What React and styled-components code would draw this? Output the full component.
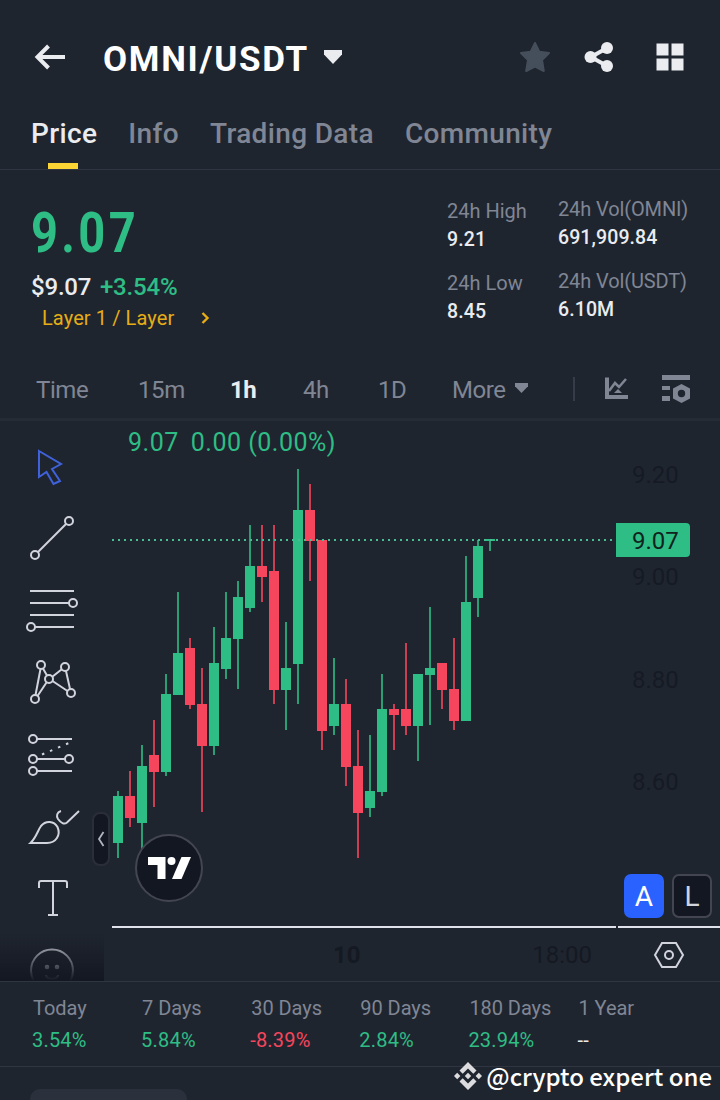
import React from 'react';
import styled, { createGlobalStyle } from 'styled-components';

const UP = '#2ebd85';
const DOWN = '#f6465d';

// x is the centre of the candle, the rest are y positions: high, body top, body bottom, low
const candles = [
  [118, 791, 796, 843, 858, UP],
  [130, 771, 796, 818, 827, DOWN],
  [142, 745, 766, 823, 850, UP],
  [154, 720, 755, 772, 807, DOWN],
  [166, 674, 694, 772, 776, UP],
  [178, 592, 653, 695, 695, UP],
  [190, 638, 648, 705, 709, DOWN],
  [202, 668, 704, 746, 812, DOWN],
  [214, 627, 663, 746, 755, UP],
  [226, 592, 638, 669, 679, UP],
  [238, 581, 597, 639, 689, UP],
  [250, 525, 566, 608, 612, UP],
  [262, 525, 566, 577, 602, DOWN],
  [274, 525, 571, 690, 704, DOWN],
  [286, 622, 668, 690, 730, UP],
  [298, 469, 510, 664, 704, UP],
  [310, 484, 510, 541, 581, DOWN],
  [322, 540, 540, 731, 750, DOWN],
  [334, 658, 704, 726, 735, UP],
  [346, 679, 704, 767, 786, DOWN],
  [358, 730, 766, 813, 858, DOWN],
  [370, 735, 791, 808, 817, UP],
  [382, 674, 709, 792, 796, UP],
  [394, 704, 709, 715, 750, DOWN],
  [406, 643, 709, 726, 735, DOWN],
  [418, 674, 674, 726, 761, UP],
  [430, 607, 668, 675, 725, UP],
  [442, 663, 663, 690, 709, DOWN],
  [454, 638, 689, 721, 730, DOWN],
  [466, 556, 602, 721, 721, UP],
  [478, 540, 546, 598, 617, UP],
  [490, 539, 539, 541, 551, UP],
];

const tabs = ['Price', 'Info', 'Trading Data', 'Community'];

const performance = [
  { label: 'Today', value: '3.54%', color: UP },
  { label: '7 Days', value: '5.84%', color: UP },
  { label: '30 Days', value: '-8.39%', color: DOWN },
  { label: '90 Days', value: '2.84%', color: UP },
  { label: '180 Days', value: '23.94%', color: UP },
  { label: '1 Year', value: '--', color: '#eaecef' },
];

const tools = [
  <path key="cursor" d="M39 21 L61 34 L52 39 L60 51 L53.5 54 L46.500 42 L39 47 Z" stroke="#3f62dc" />,
  <g key="line">
    <circle cx="69" cy="19" r="4" />
    <circle cx="35" cy="53" r="4" />
    <path d="M38 50 L66 22" />
  </g>,
  <g key="fib">
    <path d="M30 17 H74 M30 29 H69 M30 41 H74 M35 53 H74" />
    <circle cx="73" cy="29" r="4" />
    <circle cx="31" cy="53" r="4" />
  </g>,
  <g key="pattern">
    <circle cx="41" cy="19" r="4" />
    <circle cx="65" cy="21" r="4" />
    <circle cx="49" cy="33" r="4" />
    <circle cx="71" cy="47" r="4" />
    <circle cx="35" cy="53" r="4" />
    <path d="M40.500 23 L35.500 49 M43 22.500 L47 29.500 M52 31 L61.500 23.500 M66 25 L70 43 M52.500 35 L67.500 45 M46.500 36.500 L37.500 50" />
  </g>,
  <g key="forecast">
    <circle cx="33" cy="21" r="4" />
    <circle cx="33" cy="41" r="4" />
    <circle cx="69" cy="41" r="4" />
    <circle cx="33" cy="53" r="4" />
    <path d="M37 21 H72 M37 41 H65 M37 53 H72" />
    <path d="M42 36.500 L69 25" strokeDasharray="2.500 6.200" />
  </g>,
  <g key="brush">
    <path d="M30.500 53 C36 48 38 40 41 36 C46 30 54 31 57.500 37 C61 45 56 53 47 53 Z" />
    <path d="M61 21 C57 22 56 26 58 29 C61 33 64 35 67 32.500 L79 21" />
  </g>,
  <path key="text" d="M39 26 V21 Q39 19 41 19 H65 Q67 19 67 21 V26 M53 19 V53 M48 53 H58" />,
  <g key="smiley">
    <circle cx="52" cy="36.500" r="21" />
    <circle cx="47" cy="33" r="1.300" />
    <circle cx="57" cy="33" r="1.300" />
    <path d="M46 41 C46.500 46 57.500 46 58 41" />
  </g>,
];

const Caret = ({ width, height, color }) => (
  <svg width={width} height={height} viewBox="0 0 18 14" preserveAspectRatio="none">
    <path d="M0 0 H18 V4.500 L9 14 L0 4.500 Z" fill={color} />
  </svg>
);

const TopBar = () => (
  <Header>
    <BackIcon width="32" height="26" viewBox="0 0 32 26">
      <path d="M31 13 H4 M14.500 2 L3.500 13 L14.500 24" fill="none" stroke="#eaecef" strokeWidth="4" />
    </BackIcon>
    <Pair>OMNI/USDT</Pair>
    <Caret width={18} height={14} color="#eaecef" />
    <HeaderActions>
      <svg width="32" height="32" viewBox="0 0 32 32">
        <path
          d="M16 2 L20.300 10.700 L30 12 L23 19 L24.800 30 L16 25.500 L7.200 30 L9 19 L2 12 L11.700 10.700 Z"
          fill="#454e5b"
          stroke="#454e5b"
          strokeWidth="2"
          strokeLinejoin="round"
        />
      </svg>
      <svg width="30" height="32" viewBox="0 0 30 32">
        <path d="M23 7 L7 16 L23 25" fill="none" stroke="#eaecef" strokeWidth="4" />
        <circle cx="23" cy="7" r="6" fill="#eaecef" />
        <circle cx="6.500" cy="16" r="6" fill="#eaecef" />
        <circle cx="23" cy="25" r="6" fill="#eaecef" />
      </svg>
      <svg width="28" height="28" viewBox="0 0 28 28" fill="#eaecef">
        <path d="M0.500 0.500 H12.500 V12.500 H0.500 Z M15.500 0.500 H27.500 V12.500 H15.500 Z M0.500 15.500 H12.500 V27.500 H0.500 Z M15.500 15.500 H27.500 V27.500 H15.500 Z" />
      </svg>
    </HeaderActions>
  </Header>
);

const Summary = () => (
  <SummaryRow>
    <PriceColumn>
      <LastPrice>9.07</LastPrice>
      <FiatLine>
        $9.07 <Change>+3.54%</Change>
      </FiatLine>
      <TagLine>
        Layer 1 / Layer
        <svg width="9" height="12" viewBox="0 0 9 12">
          <path d="M1.500 1 L6.500 6 L1.500 11" fill="none" stroke="#e6ad16" strokeWidth="2.400" />
        </svg>
      </TagLine>
    </PriceColumn>
    <StatColumn $top={29}>
      <StatLabel $spacing={0}>24h High</StatLabel>
      <StatValue>9.21</StatValue>
      <StatLabel $spacing={0}>24h Low</StatLabel>
      <StatValue>8.45</StatValue>
    </StatColumn>
    <StatColumn $top={27}>
      <StatLabel $spacing={-0.12}>24h Vol(OMNI)</StatLabel>
      <StatValue>691,909.84</StatValue>
      <StatLabel $spacing={-0.12}>24h Vol(USDT)</StatLabel>
      <StatValue>6.10M</StatValue>
    </StatColumn>
  </SummaryRow>
);

const Intervals = () => (
  <IntervalBar>
    <Interval>Time</Interval>
    <Interval>15m</Interval>
    <Interval $active>1h</Interval>
    <Interval>4h</Interval>
    <Interval>1D</Interval>
    <Interval>
      More
      <Caret width={13} height={10} color="#808694" />
    </Interval>
    <Divider />
    <svg width="24" height="24" viewBox="0 0 24 24" fill="none" stroke="#808694">
      <path d="M2 0.500 V20 H23" strokeWidth="4" />
      <path d="M4 14 L10 6 L14 10 L21 2" strokeWidth="2.500" />
      <path d="M9 16 L13 12 L17 16 Z" fill="#808694" stroke="none" />
    </svg>
    <svg width="29" height="30" viewBox="0 0 29 30" fill="#808694">
      <path d="M0 1 H28 V6 H0 Z M0 12 H8 V16 H0 Z M0 22 H8 V27 H0 Z" />
      <path
        fillRule="evenodd"
        d="M19.500 10 L28 14.500 V24.500 L19.500 29 L11 24.500 V14.500 Z M19.500 15.800 A3.700 3.700 0 1 0 19.500 23.200 A3.700 3.700 0 1 0 19.500 15.800 Z"
      />
    </svg>
  </IntervalBar>
);

const Chart = () => (
  <ChartArea>
    <Toolbar>
      {tools.map((tool) => (
        <ToolIcon key={tool.key} viewBox="0 0 104 72">
          {tool}
        </ToolIcon>
      ))}
      <ToolbarFade />
    </Toolbar>
    <Collapse>
      <svg width="8" height="18" viewBox="0 0 8 18">
        <path d="M6.500 2 L2 9 L6.500 16" fill="none" stroke="#b2b5be" strokeWidth="1.800" />
      </svg>
    </Collapse>

    <PlotColumn>
      <Plot viewBox="112 421 504 505">
        {candles.map(([x, high, top, bottom, low, color]) => (
          <g key={x} fill={color}>
            <rect x={x - 1} y={high} width="2" height={low - high} opacity="0.8" />
            <rect x={x - 5} y={top} width="10" height={bottom - top} />
          </g>
        ))}
        <path d="M112 540 H616" stroke="#48bd93" strokeWidth="2" strokeDasharray="2 4" />
      </Plot>
      <Legend>
        <span>9.07</span>
        <span>0.00 (0.00%)</span>
      </Legend>
      <Brand>
        <svg width="44" height="24" viewBox="0 0 44 24" fill="#fff">
          <path d="M1 1 H18.500 V23 H10.500 V9 H1 Z" />
          <circle cx="24.500" cy="5" r="4" />
          <path d="M34.500 1 H44 L34.500 23 H25 Z" />
        </svg>
      </Brand>
      <TimeAxis>
        <TimeLabel $bold>10</TimeLabel>
        <TimeLabel>18:00</TimeLabel>
      </TimeAxis>
    </PlotColumn>

    <ScaleColumn>
      <PriceScale>
        <PriceLabel>9.20</PriceLabel>
        <PriceLabel>9.00</PriceLabel>
        <PriceLabel>8.80</PriceLabel>
        <PriceLabel>8.60</PriceLabel>
        <PriceTag>9.07</PriceTag>
        <ScaleButtons>
          <ScaleButton $active>A</ScaleButton>
          <ScaleButton>L</ScaleButton>
        </ScaleButtons>
      </PriceScale>
      <AxisSettings>
        <svg width="32" height="28" viewBox="0 0 32 28" fill="none" stroke="#d1d4dc" strokeWidth="2">
          <path d="M9 2 H23 L30 14 L23 26 H9 L2 14 Z" />
          <circle cx="16" cy="14" r="4" />
        </svg>
      </AxisSettings>
    </ScaleColumn>
  </ChartArea>
);

const App = () => {
  return (
    <>
      <GlobalStyle />
      <Screen>
        <TopBar />
        <Tabs>
          {tabs.map((tab, i) => (
            <Tab key={tab} $active={i === 0}>
              {tab}
            </Tab>
          ))}
        </Tabs>
        <Summary />
        <Intervals />
        <Chart />
        <Performance>
          {performance.map(({ label, value, color }) => (
            <Period key={label}>
              <PeriodLabel>{label}</PeriodLabel>
              <PeriodValue $color={color}>{value}</PeriodValue>
            </Period>
          ))}
        </Performance>
        <BottomArea>
          <BottomPill />
        </BottomArea>
        <Watermark>
          <svg width="28" height="28" viewBox="0 0 28 28" fill="#dcdcde">
            <path d="M14 0 L22.500 8.500 L19.300 11.700 L14 6.400 L8.700 11.700 L5.500 8.500 Z" />
            <path d="M14 28 L22.500 19.500 L19.300 16.300 L14 21.600 L8.700 16.300 L5.500 19.500 Z" />
            <path d="M14 10.800 L17.200 14 L14 17.200 L10.800 14 Z M3.200 10.800 L6.400 14 L3.200 17.200 L0 14 Z M24.800 10.800 L28 14 L24.800 17.200 L21.600 14 Z" />
          </svg>
          @crypto expert one
        </Watermark>
      </Screen>
    </>
  );
};

export default App;

const GlobalStyle = createGlobalStyle`
  * {
    box-sizing: border-box;
  }
  body {
    margin: 0;
    background: #1f252f;
    font-family: Roboto, "Liberation Sans", sans-serif;
  }
  svg {
    display: block;
    flex-shrink: 0;
  }
`;

const Screen = styled.div`
  position: relative;
  width: 720px;
  height: 1100px;
  overflow: hidden;
  display: grid;
  grid-template-columns: 720px;
  grid-template-rows: 114px 56px 190px 61px 560px 86px 33px;
  background: #1f252f;
  color: #eaecef;
  white-space: nowrap;
`;

const Header = styled.header`
  display: flex;
  align-items: center;
  padding: 0 36px 0 34px;
`;

const BackIcon = styled.svg`
  margin-right: 37px;
`;

const Pair = styled.h1`
  width: 221px;
  margin: 4px 0 0;
  font-size: 35px;
  font-weight: 700;
  letter-spacing: 1.7px;
  color: #fff;
`;

const HeaderActions = styled.div`
  margin-left: auto;
  display: flex;
  align-items: center;
  gap: 42px;

  svg:first-child {
    margin-right: -9px;
  }
`;

const Tabs = styled.nav`
  display: flex;
  gap: 31px;
  padding-left: 31px;
  border-bottom: 1px solid #2f3641;
`;

const Tab = styled.div`
  position: relative;
  line-height: 39px;
  font-size: 28px;
  font-weight: 500;
  letter-spacing: 0.35px;
  color: ${({ $active }) => ($active ? '#eaecef' : '#808694')};

  &::after {
    content: '';
    display: ${({ $active }) => ($active ? 'block' : 'none')};
    position: absolute;
    left: 17px;
    bottom: 0;
    width: 30px;
    height: 6px;
    background: #fcd535;
  }
`;

const SummaryRow = styled.section`
  display: grid;
  grid-template-columns: 416px 111px auto;
  padding-left: 31px;
`;

const PriceColumn = styled.div`
  padding-top: 31px;
`;

const LastPrice = styled.div`
  line-height: 64px;
  font-size: 56px;
  font-weight: 700;
  letter-spacing: 4px;
  color: ${UP};
  transform: scaleX(0.84);
  transform-origin: left;
`;

const FiatLine = styled.div`
  margin-top: 7px;
  line-height: 30px;
  font-size: 24px;
  font-weight: 500;
  letter-spacing: -0.2px;
`;

const Change = styled.span`
  margin-left: 3px;
  color: ${UP};
`;

const TagLine = styled.div`
  display: flex;
  align-items: center;
  gap: 27px;
  padding-left: 11px;
  line-height: 32px;
  font-size: 20px;
  letter-spacing: 0.1px;
  color: #e6ad16;
`;

const StatColumn = styled.div`
  padding-top: ${({ $top }) => $top}px;
`;

const StatLabel = styled.div`
  line-height: 24px;
  font-size: 20px;
  letter-spacing: ${({ $spacing }) => $spacing}px;
  color: #808694;
`;

const StatValue = styled.div`
  margin: 3px 0 17px;
  line-height: 28px;
  font-size: 19.5px;
  font-weight: 500;
  letter-spacing: 0.1px;
`;

const IntervalBar = styled.div`
  display: grid;
  grid-template-columns: 102px 92px 73px 75px 74px 121px 32px 57px auto;
  align-items: center;
  padding-left: 36px;
  border-bottom: 3px solid #262c36;
`;

const Interval = styled.div`
  display: flex;
  align-items: center;
  gap: 9px;
  padding-top: 2px;
  font-size: 24px;
  font-weight: ${({ $active }) => ($active ? 700 : 400)};
  letter-spacing: -0.4px;
  color: ${({ $active }) => ($active ? '#eaecef' : '#808694')};

  svg {
    margin-top: -4px;
  }
`;

const Divider = styled.div`
  width: 2px;
  height: 24px;
  background: #363d48;
`;

const ChartArea = styled.section`
  position: relative;
  display: grid;
  grid-template-columns: 104px 504px 96px;
  column-gap: 8px;
`;

const Toolbar = styled.div`
  position: relative;
  height: 560px;
  padding-top: 9px;
  overflow: hidden;
`;

const ToolIcon = styled.svg`
  width: 104px;
  height: 72px;
  fill: none;
  stroke: #d1d4dc;
  stroke-width: 2;
`;

const ToolbarFade = styled.div`
  position: absolute;
  left: 0;
  right: 0;
  bottom: 0;
  height: 48px;
  background: linear-gradient(rgba(19, 23, 34, 0), #131722);
`;

const Collapse = styled.div`
  position: absolute;
  left: 92px;
  top: 391px;
  width: 18px;
  height: 54px;
  display: flex;
  align-items: center;
  justify-content: center;
  border: 2px solid #2a2e39;
  border-radius: 8px;
  background: #131722;
`;

const PlotColumn = styled.div`
  position: relative;
`;

const Plot = styled.svg`
  width: 504px;
  height: 505px;
`;

const Legend = styled.div`
  position: absolute;
  left: 16px;
  top: 7px;
  display: flex;
  gap: 12px;
  line-height: 30px;
  font-size: 25px;
  letter-spacing: 0.5px;
  color: ${UP};
`;

const Brand = styled.div`
  position: absolute;
  left: 23px;
  top: 413px;
  width: 68px;
  height: 68px;
  display: flex;
  align-items: center;
  justify-content: center;
  border: 2px solid #434651;
  border-radius: 50%;
  background: #131722;
`;

const TimeAxis = styled.div`
  height: 55px;
  display: flex;
  justify-content: space-between;
  padding: 0 24px 0 221px;
  border-top: 2px solid #dfe2ea;
`;

const TimeLabel = styled.span`
  line-height: 55px;
  font-size: 24px;
  font-weight: ${({ $bold }) => ($bold ? 700 : 400)};
  color: #141922;
`;

const ScaleColumn = styled.div`
  width: 104px;
  margin-left: -8px;
`;

const PriceScale = styled.div`
  position: relative;
  height: 505px;
  padding: 39px 0 0 16px;
`;

const PriceLabel = styled.div`
  height: 102.300px;
  line-height: 30px;
  font-size: 24px;
  color: #151a24;
`;

const PriceTag = styled.div`
  position: absolute;
  left: 0;
  top: 102px;
  width: 74px;
  height: 34px;
  padding-left: 16px;
  line-height: 37px;
  font-size: 24px;
  border-radius: 0 4px 4px 0;
  background: ${UP};
  color: #10231d;
`;

const ScaleButtons = styled.div`
  position: absolute;
  left: 8px;
  bottom: 8px;
  display: flex;
  gap: 8px;
`;

const ScaleButton = styled.div`
  width: 40px;
  height: 44px;
  display: flex;
  align-items: center;
  justify-content: center;
  border: 2px solid ${({ $active }) => ($active ? '#2962ff' : '#434651')};
  border-radius: 7px;
  background: ${({ $active }) => ($active ? '#2962ff' : '#131722')};
  font-size: 28px;
  color: ${({ $active }) => ($active ? '#fff' : '#d1d4dc')};
`;

const AxisSettings = styled.div`
  width: 102px;
  height: 55px;
  margin-left: 2px;
  display: flex;
  align-items: center;
  justify-content: center;
  border-top: 2px solid #dfe2ea;
`;

const Performance = styled.section`
  display: grid;
  grid-template-columns: repeat(6, 109.100px);
  padding: 10px 0 0 32px;
  border-top: 1px solid #2f3641;
  border-bottom: 1px solid #2f3641;
`;

const Period = styled.div`
  line-height: 32px;
`;

const PeriodLabel = styled.div`
  padding-left: 1px;
  font-size: 20px;
  letter-spacing: -0.05px;
  color: #808694;
`;

const PeriodValue = styled.div`
  font-size: 20px;
  letter-spacing: 0.2px;
  color: ${({ $color }) => $color};
`;

const BottomArea = styled.div`
  padding: 22px 0 0 30px;
  overflow: hidden;
`;

const BottomPill = styled.div`
  width: 157px;
  height: 40px;
  border-radius: 10px;
  background: #2b313c;
`;

const Watermark = styled.div`
  position: absolute;
  right: 8px;
  bottom: 6px;
  display: flex;
  align-items: center;
  gap: 4px;
  line-height: 36px;
  font-family: 'Noto Sans CJK SC', 'Noto Sans', sans-serif;
  font-size: 24px;
  font-weight: 500;
  color: #fff;
`;
